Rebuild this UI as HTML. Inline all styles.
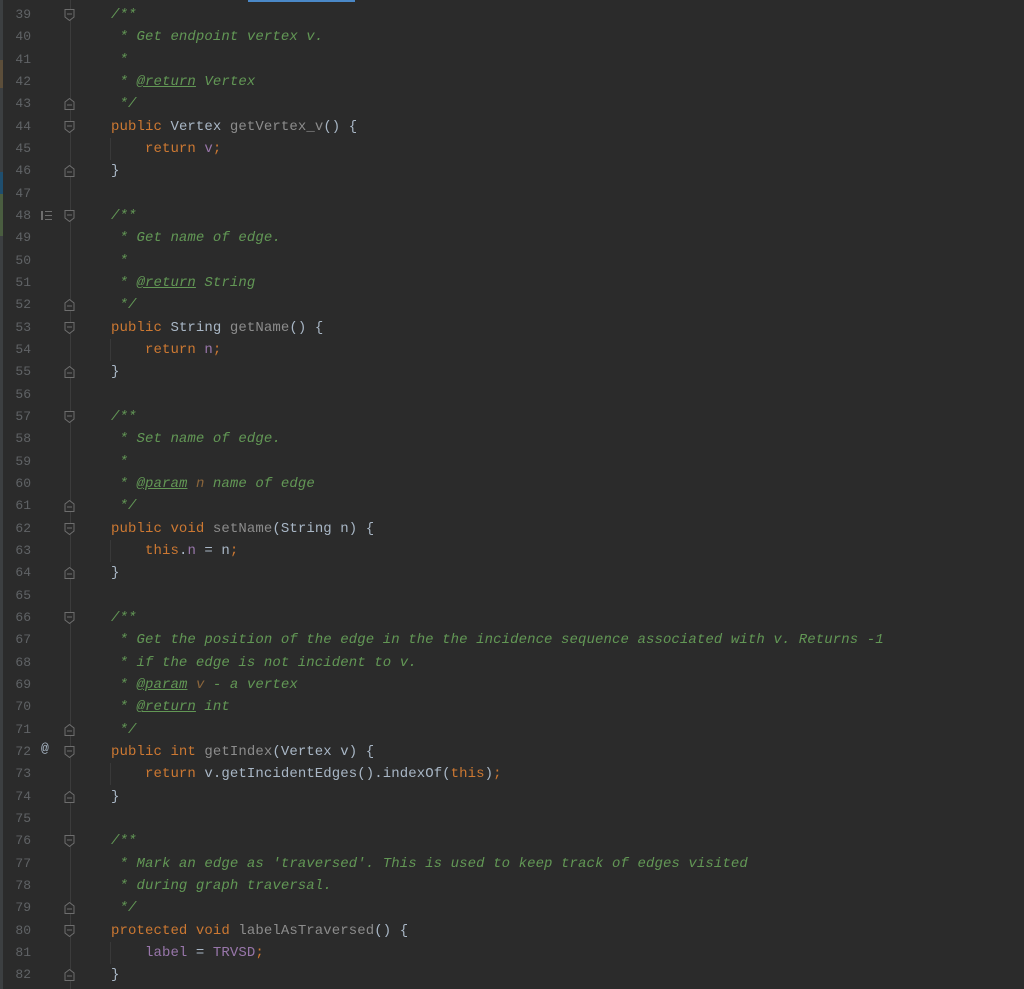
<!DOCTYPE html>
<html><head><meta charset="utf-8"><style>
body{margin:0;width:1024px;height:989px;background:#2b2b2b;overflow:hidden;position:relative;font-family:"Liberation Mono",monospace;font-size:14px}
.ln{position:absolute;left:0;width:31px;text-align:right;color:#606366;font-size:13px}
.l{position:absolute;left:111px;white-space:pre;color:#a9b7c6;letter-spacing:0.09px}
.k{color:#cc7832}.c{color:#629755;font-style:italic}.t{color:#629755;font-style:italic;text-decoration:underline}
.p{color:#8a653b;font-style:italic}.f{color:#9876aa}.g{color:#8c8c8c}
.fold{position:absolute;left:64px;width:11px;height:12px}
</style></head><body>
<div style="position:absolute;left:0;top:0;width:3px;height:989px;background:#3c3f41"></div>
<div style="position:absolute;left:0;top:60px;width:3px;height:28px;background:#5c4e3a"></div>
<div style="position:absolute;left:0;top:172px;width:3px;height:22px;background:#1f4e6e"></div>
<div style="position:absolute;left:0;top:194px;width:3px;height:42px;background:#4a5d40"></div>
<div style="position:absolute;left:248px;top:0;width:107px;height:2px;background:#4a88c7"></div>
<div style="position:absolute;left:70px;top:0;width:1px;height:989px;background:#3c3c3c"></div>
<div style="position:absolute;left:110px;top:138px;width:1px;height:22px;background:#393939"></div>
<div style="position:absolute;left:110px;top:339px;width:1px;height:22px;background:#393939"></div>
<div style="position:absolute;left:110px;top:540px;width:1px;height:22px;background:#393939"></div>
<div style="position:absolute;left:110px;top:763px;width:1px;height:22px;background:#393939"></div>
<div style="position:absolute;left:110px;top:942px;width:1px;height:22px;background:#393939"></div>
<div style="position:absolute;left:41px;top:211px;width:2px;height:9px;background:#6e6e6e"></div>
<div style="position:absolute;left:45px;top:211px;width:7px;height:1px;background:#6e6e6e;box-shadow:0 4px #6e6e6e,0 8px #6e6e6e"></div>
<div style="position:absolute;left:41px;top:741px;color:#a9b7c6;font-size:13px;line-height:16px">@</div>
<div id="c"></div>
<script>
const L={
39:'<span class="c">/**</span>',
40:'<span class="c"> * Get endpoint vertex v.</span>',
41:'<span class="c"> *</span>',
42:'<span class="c"> * </span><span class="t">@return</span><span class="c"> Vertex</span>',
43:'<span class="c"> */</span>',
44:'<span class="k">public </span>Vertex <span class="g">getVertex_v</span>() {',
45:'    <span class="k">return </span><span class="f">v</span><span class="k">;</span>',
46:'}',47:'',
48:'<span class="c">/**</span>',
49:'<span class="c"> * Get name of edge.</span>',
50:'<span class="c"> *</span>',
51:'<span class="c"> * </span><span class="t">@return</span><span class="c"> String</span>',
52:'<span class="c"> */</span>',
53:'<span class="k">public </span>String <span class="g">getName</span>() {',
54:'    <span class="k">return </span><span class="f">n</span><span class="k">;</span>',
55:'}',56:'',
57:'<span class="c">/**</span>',
58:'<span class="c"> * Set name of edge.</span>',
59:'<span class="c"> *</span>',
60:'<span class="c"> * </span><span class="t">@param</span><span class="c"> </span><span class="p">n</span><span class="c"> name of edge</span>',
61:'<span class="c"> */</span>',
62:'<span class="k">public void </span><span class="g">setName</span>(String n) {',
63:'    <span class="k">this</span>.<span class="f">n </span>= n<span class="k">;</span>',
64:'}',65:'',
66:'<span class="c">/**</span>',
67:'<span class="c"> * Get the position of the edge in the the incidence sequence associated with v. Returns -1</span>',
68:'<span class="c"> * if the edge is not incident to v.</span>',
69:'<span class="c"> * </span><span class="t">@param</span><span class="c"> </span><span class="p">v</span><span class="c"> - a vertex</span>',
70:'<span class="c"> * </span><span class="t">@return</span><span class="c"> int</span>',
71:'<span class="c"> */</span>',
72:'<span class="k">public int </span><span class="g">getIndex</span>(Vertex v) {',
73:'    <span class="k">return </span>v.getIncidentEdges().indexOf(<span class="k">this</span>)<span class="k">;</span>',
74:'}',75:'',
76:'<span class="c">/**</span>',
77:'<span class="c"> * Mark an edge as \'traversed\'. This is used to keep track of edges visited</span>',
78:'<span class="c"> * during graph traversal.</span>',
79:'<span class="c"> */</span>',
80:'<span class="k">protected void </span><span class="g">labelAsTraversed</span>() {',
81:'    <span class="f">label </span>= <span class="f">TRVSD</span><span class="k">;</span>',
82:'}'};
const open=[39,44,48,53,57,62,66,72,76,80],close=[43,46,52,55,61,64,71,74,79,82];
let h='';
for(let n=39;n<=82;n++){const top=4+(n-39)*22.33;
h+=`<div class="ln" style="top:${top}px;line-height:22px">${n}</div><div class="l" style="top:${top}px;line-height:22px">${L[n]}</div>`;
const y=top+5;
if(open.includes(n))h+=`<svg class="fold" style="top:${y}px" viewBox="0 0 11 12"><path d="M1 .5H10V8L5.5 11.5 1 8Z" fill="#2b2b2b" stroke="#6e6e6e"/><path d="M3 5H8" stroke="#6e6e6e"/></svg>`;
if(close.includes(n))h+=`<svg class="fold" style="top:${y}px" viewBox="0 0 11 12"><path d="M1 11.5H10V4L5.5 .5 1 4Z" fill="#2b2b2b" stroke="#6e6e6e"/><path d="M3 7H8" stroke="#6e6e6e"/></svg>`;}
document.getElementById('c').innerHTML=h;
</script>
</body></html>
